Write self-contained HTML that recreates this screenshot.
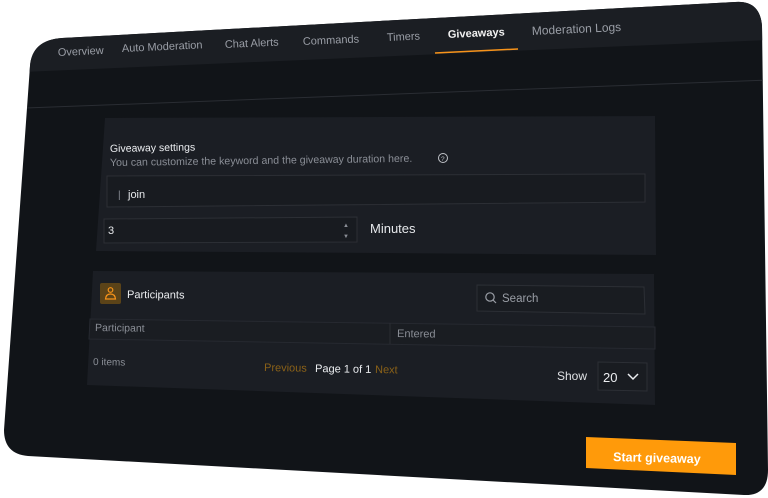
<!DOCTYPE html>
<html><head><meta charset="utf-8"><style>
html,body{margin:0;padding:0;background:#fff;width:768px;height:498px;overflow:hidden}
svg{display:block}
text{font-family:"Liberation Sans",sans-serif}
</style></head><body>
<svg width="768" height="498" viewBox="0 0 768 498" xmlns="http://www.w3.org/2000/svg">
<defs>
<clipPath id="card"><path d="M62,38 L735,2 Q760,0 762,26 L768,470 Q768,496 744,495 L28,456 Q4,454 4,430 L30,66 Q32,40 62,38 Z"/></clipPath>
</defs>
<path d="M62,38 L735,2 Q760,0 762,26 L768,470 Q768,496 744,495 L28,456 Q4,454 4,430 L30,66 Q32,40 62,38 Z" fill="#111418"/>
<g clip-path="url(#card)">
<path d="M0,0 L768,0 L768,40 L0,73 Z" fill="#1b1e23"/>
<line x1="0" y1="109" x2="768" y2="80" stroke="#2a2d33" stroke-width="1"/>
</g>
<g fill="#9a9ea6" font-size="11">
<text x="58" y="56" transform="rotate(-2.6 58 56)">Overview</text>
<text x="122" y="52" transform="rotate(-2.6 122 52)">Auto Moderation</text>
<text x="225" y="48" transform="rotate(-2.6 225 48)">Chat Alerts</text>
<text x="303" y="45" transform="rotate(-2.6 303 45)">Commands</text>
<text x="387" y="41" transform="rotate(-2.6 387 41)">Timers</text>
<text x="448" y="38" fill="#f2f2f2" font-weight="bold" transform="rotate(-2.6 448 38)">Giveaways</text>
<text x="532" y="35" transform="rotate(-2.6 532 35)" font-size="12">Moderation Logs</text>
</g>
<line x1="435" y1="53" x2="518" y2="49" stroke="#f7931a" stroke-width="1.5"/>
<path d="M105,118 L655,116 L656,255 L96,251 Z" fill="#1b1e24"/>
<text x="110" y="152" fill="#eceef1" font-size="10.5" transform="rotate(-1 110 152)">Giveaway settings</text>
<text x="110" y="166" fill="#8a8e96" font-size="10.6" transform="rotate(-0.8 110 166)">You can customize the keyword and the giveaway duration here.</text>
<circle cx="443" cy="158" r="4.5" fill="none" stroke="#bfc2c7" stroke-width="1"/>
<text x="441" y="161" fill="#bfc2c7" font-size="6.5">?</text>
<path d="M107,176 L645,174 L645,202 L107,207 Z" fill="#181b20" stroke="#2c2f35"/>
<text x="118" y="198" fill="#8a8e96" font-size="10">|</text>
<text x="128" y="198" fill="#e6e8eb" font-size="11">join</text>
<path d="M104,219 L357,217 L357,242 L104,243 Z" fill="#181b20" stroke="#2c2f35"/>
<text x="108" y="234" fill="#e6e8eb" font-size="11">3</text>
<text x="343" y="227" fill="#8a8e96" font-size="6">▲</text>
<text x="343" y="238" fill="#8a8e96" font-size="6">▼</text>
<text x="370" y="233" fill="#e6e8eb" font-size="13">Minutes</text>
<path d="M93,271 L654,274 L655,405 L87,385 Z" fill="#1b1e24"/>
<rect x="100" y="283" width="21" height="21" rx="2" fill="#5b4318"/>
<circle cx="110.5" cy="290" r="2.3" fill="none" stroke="#f7931a" stroke-width="1.2"/>
<path d="M105.5,299 Q106,294 110.5,294 Q115,294 115.5,299 Z" fill="none" stroke="#f7931a" stroke-width="1.2"/>
<text x="127" y="298" fill="#eceef1" font-size="11" transform="rotate(0.5 127 298)">Participants</text>
<path d="M477,285 L644,287 L645,314 L477,311 Z" fill="#191c21" stroke="#2c2f35"/>
<circle cx="490" cy="297" r="4.2" fill="none" stroke="#9a9ea6" stroke-width="1.2"/>
<line x1="493" y1="300" x2="496" y2="303" stroke="#9a9ea6" stroke-width="1.2"/>
<text x="502" y="302" fill="#9a9ea6" font-size="11.5">Search</text>
<path d="M90,319 L655,327 L655,349 L89,339 Z" fill="#1a1d22" stroke="#262930"/>
<line x1="390" y1="323" x2="390" y2="344" stroke="#2a2d33"/>
<text x="95" y="331" fill="#8a8e96" font-size="10.5" transform="rotate(0.8 95 331)">Participant</text>
<text x="397" y="337" fill="#8a8e96" font-size="11" transform="rotate(0.8 397 337)">Entered</text>
<text x="93" y="365" fill="#8a8e96" font-size="10" transform="rotate(1 93 365)">0 items</text>
<text x="264" y="371" fill="#8a6118" font-size="11" transform="rotate(1 264 371)">Previous</text>
<text x="315" y="372" fill="#eceef1" font-size="11" transform="rotate(1 315 372)">Page 1 of 1</text>
<text x="375" y="373" fill="#8a6118" font-size="11" transform="rotate(1 375 373)">Next</text>
<text x="557" y="380" fill="#dfe1e4" font-size="12">Show</text>
<path d="M598,362 L647,363 L647,391 L598,390 Z" fill="#191c21" stroke="#2c2f35"/>
<text x="603" y="382" fill="#eceef1" font-size="13">20</text>
<path d="M628,374 L633,379 L638,374" fill="none" stroke="#eceef1" stroke-width="1.5"/>
<path d="M586,437 L736,443 L736,475 L586,468 Z" fill="#ff9a0a"/>
<text x="613" y="461" fill="#fff" font-size="12.5" font-weight="bold" transform="rotate(1.5 613 461)">Start giveaway</text>
</svg>
</body></html>
